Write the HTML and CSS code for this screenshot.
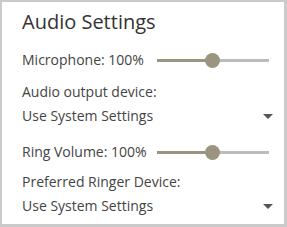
FILE: index.html
```html
<!DOCTYPE html>
<html lang="en">
  <head>
    <meta charset="UTF-8" />
    <title>Audio Settings</title>
    <link rel="stylesheet" href="styles.css">
  </head>
  <body>
    <div class="panel">
      <h2>Audio Settings</h2>

      <div class="slider-row">
        <span class="label">Microphone: 100%</span>
        <div class="slider">
          <div class="track-fill" style="width: 55px"></div>
          <div class="thumb" style="left: 55px"></div>
        </div>
      </div>

      <div class="field">
        <span class="label">Audio output device:</span>
        <div class="select">
          <span>Use System Settings</span>
          <span class="arrow"></span>
        </div>
      </div>

      <div class="slider-row">
        <span class="label">Ring Volume: 100%</span>
        <div class="slider">
          <div class="track-fill" style="width: 55px"></div>
          <div class="thumb" style="left: 55px"></div>
        </div>
      </div>

      <div class="field field-last">
        <span class="label">Preferred Ringer Device:</span>
        <div class="select">
          <span>Use System Settings</span>
          <span class="arrow"></span>
        </div>
      </div>
    </div>
  </body>
</html>
```

FILE: styles.css
```css
* {
  margin: 0;
  padding: 0;
  box-sizing: border-box;
  font-family: "Open Sans", sans-serif;
}

body {
  background: #fff;
}

.panel {
  width: 287px;
  height: 227px;
  border: 2px solid #cacaca;
  border-right-width: 3px;
  border-bottom-width: 3px;
  padding: 6px 15px 0 20px;
  color: #444;
}

h2 {
  font-size: 20px;
  font-weight: 400;
  color: #333;
  line-height: 28px;
  margin-bottom: 12px;
}

.label {
  display: block;
  font-size: 14px;
  line-height: 20px;
}

.slider-row {
  display: flex;
  align-items: center;
  justify-content: space-between;
  height: 24px;
}

.field + .slider-row {
  margin-top: 10px;
}

.slider {
  position: relative;
  width: 112px;
  height: 3px;
  background: #bcbcbc;
}

.track-fill {
  height: 3px;
  background: #9b9580;
}

.thumb {
  position: absolute;
  top: -6px;
  width: 15px;
  height: 15px;
  margin-left: -7px;
  border-radius: 50%;
  background: #9b9580;
}

.field {
  margin-top: 10px;
}

.field-last {
  margin-top: 8px;
}

.select {
  display: flex;
  justify-content: space-between;
  align-items: center;
  font-size: 14px;
  line-height: 28px;
}

.arrow {
  width: 0;
  height: 0;
  margin-right: -4px;
  border-left: 5px solid transparent;
  border-right: 5px solid transparent;
  border-top: 5px solid #555;
}
```
